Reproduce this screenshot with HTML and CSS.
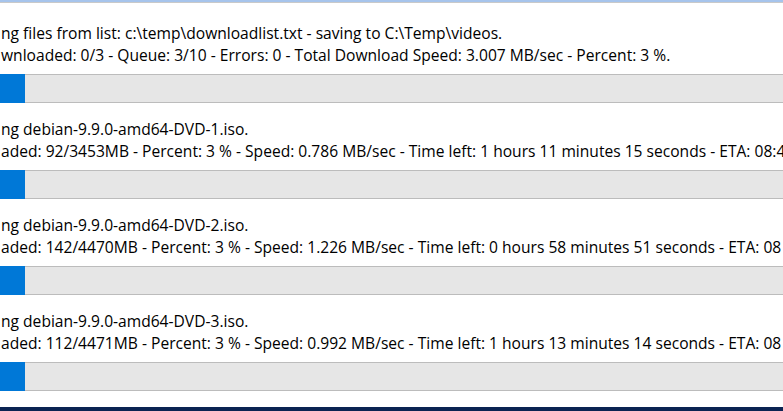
FILE: index.html
```html
<!DOCTYPE html>
<html>
<head>
<meta charset="utf-8">
<link rel="stylesheet" href="styles.css">
</head>
<body>
<div class="window">
  <div class="content">
    <div class="item">
      <div class="line">ng files from list: c:\temp\downloadlist.txt - saving to C:\Temp\videos.</div>
      <div class="line">wnloaded: 0/3 - Queue: 3/10 - Errors: 0 - Total Download Speed: 3.007 MB/sec - Percent: 3 %.</div>
      <div class="bar"><div class="fill"></div><div class="track"></div></div>
    </div>
    <div class="item">
      <div class="line">ng debian-9.9.0-amd64-DVD-1.iso.</div>
      <div class="line">aded: 92/3453MB - Percent: 3 % - Speed: 0.786 MB/sec - Time left: 1 hours 11 minutes 15 seconds - ETA: 08:4</div>
      <div class="bar"><div class="fill"></div><div class="track"></div></div>
    </div>
    <div class="item">
      <div class="line">ng debian-9.9.0-amd64-DVD-2.iso.</div>
      <div class="line">aded: 142/4470MB - Percent: 3 % - Speed: 1.226 MB/sec - Time left: 0 hours 58 minutes 51 seconds - ETA: 08</div>
      <div class="bar"><div class="fill"></div><div class="track"></div></div>
    </div>
    <div class="item">
      <div class="line">ng debian-9.9.0-amd64-DVD-3.iso.</div>
      <div class="line">aded: 112/4471MB - Percent: 3 % - Speed: 0.992 MB/sec - Time left: 1 hours 13 minutes 14 seconds - ETA: 08</div>
      <div class="bar"><div class="fill"></div><div class="track"></div></div>
    </div>
  </div>
  <div class="taskbar"></div>
</div>
</body>
</html>
```
FILE: styles.css
```css
html, body {
  margin: 0;
  padding: 0;
  background: #ffffff;
  overflow: hidden;
}
.window {
  width: 783px;
  height: 411px;
  display: flex;
  flex-direction: column;
  overflow: hidden;
  border-top: 2px solid #a6c4ec;
  box-sizing: border-box;
  font-family: "Open Sans", "Noto Sans", sans-serif;
  font-size: 15.6px;
  color: #000000;
}
.content {
  flex: 1;
  border-top: 1px solid #c9c9c9;
  padding-top: 19px;
  display: flex;
  flex-direction: column;
}
.item {
  display: flex;
  flex-direction: column;
  padding-bottom: 15px;
}
.line {
  height: 22px;
  line-height: 22px;
  white-space: nowrap;
  overflow: hidden;
  padding-left: 1px;
}
.bar {
  margin-top: 8px;
  height: 29px;
  display: flex;
}
.fill {
  width: 25px;
  background: #0078d7;
}
.track {
  flex: 1;
  background: #e6e6e6;
  border-top: 1px solid #bcbcbc;
  border-bottom: 1px solid #bcbcbc;
}
.taskbar {
  height: 4px;
  background: #0b2352;
}
```
